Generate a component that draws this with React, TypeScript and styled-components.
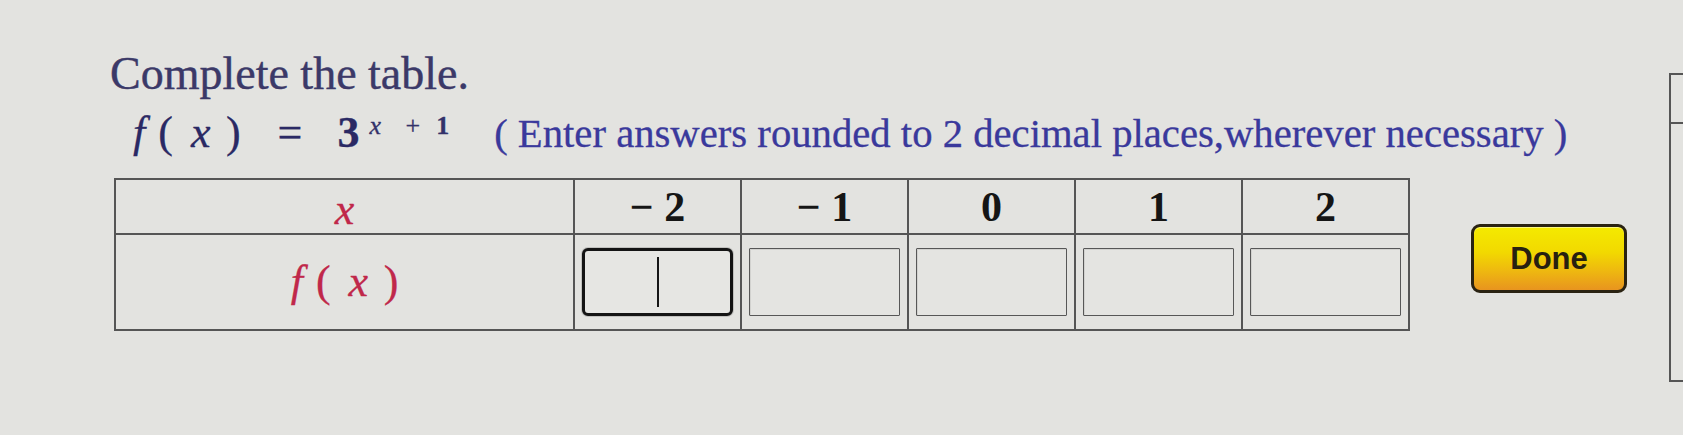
import React from "react";
import styled, { createGlobalStyle } from "styled-components";

const GlobalStyle = createGlobalStyle`
  html, body {
    margin: 0;
    padding: 0;
    background: #e3e3e0;
  }
  body {
    font-family: "Liberation Serif", "Times New Roman", serif;
  }
`;

const SERIF = `"Liberation Serif", "Times New Roman", serif`;
const SANS = `"Liberation Sans", Arial, sans-serif`;
const LINE = "#555555";
const RED = "#c0284a";
const NAVY = "#2a2964";

const Page = styled.div`
  display: flex;
  width: 1683px;
  height: 435px;
  overflow: hidden;
  background: #e3e3e0;
`;

const Main = styled.main`
  flex: none;
  width: 1669px;
  box-sizing: border-box;
  padding: 49px 0 0 110px;
`;

const Title = styled.h1`
  margin: 0;
  height: 50px;
  font-family: ${SERIF};
  font-weight: 400;
  font-size: 46px;
  line-height: 50px;
  color: #3b3968;
  -webkit-text-stroke: 0.4px currentColor;
  white-space: nowrap;
`;

const FormulaLine = styled.div`
  margin-top: 9px;
  height: 50px;
  font-family: ${SERIF};
  font-size: 40.7px;
  line-height: 50px;
  color: ${NAVY};
  -webkit-text-stroke: 0.3px currentColor;
  white-space: nowrap;
`;

const Glyph = styled.span<{
  $ml?: number;
  $italic?: boolean;
  $bold?: boolean;
  $size?: number;
  $color?: string;
}>`
  margin-left: ${(p) => p.$ml ?? 0}px;
  font-size: ${(p) => p.$size ?? 44}px;
  font-style: ${(p) => (p.$italic ? "italic" : "normal")};
  font-weight: ${(p) => (p.$bold ? 700 : 400)};
  color: ${(p) => p.$color ?? "inherit"};
`;

const Sup = styled.span`
  font-size: 26px;
  line-height: 26px;
  vertical-align: 13px;
  color: #33326a;
`;

const Instruction = styled.span`
  margin-left: 45px;
  font-size: 40.7px;
  color: #3a399c;
`;

const TableRow = styled.div`
  display: flex;
  align-items: flex-start;
  margin-top: 20px;
`;

const Grid = styled.div`
  display: grid;
  grid-template-columns: 459px repeat(5, 167px);
  grid-template-rows: 55px 96px;
  margin-left: 4px;
  border-left: 2px solid ${LINE};
  border-top: 2px solid ${LINE};
`;

const Cell = styled.div`
  display: flex;
  align-items: center;
  justify-content: center;
  box-sizing: border-box;
  border-right: 2px solid ${LINE};
  border-bottom: 2px solid ${LINE};
`;

const HeadNum = styled.span`
  font-family: ${SERIF};
  font-weight: 700;
  font-size: 42px;
  line-height: 1;
  color: #151515;
  white-space: pre;
`;

const HeadVar = styled.span`
  margin-top: 6px;
  font-family: ${SERIF};
  font-style: italic;
  font-size: 44px;
  line-height: 1;
  color: ${RED};
  -webkit-text-stroke: 0.3px currentColor;
`;

const FxLabel = styled.span`
  font-family: ${SERIF};
  font-size: 44px;
  line-height: 50px;
  white-space: nowrap;
  color: ${RED};
  -webkit-text-stroke: 0.3px currentColor;
`;

const AnswerBox = styled.div<{ $focused?: boolean }>`
  display: flex;
  align-items: center;
  justify-content: center;
  box-sizing: border-box;
  width: 151px;
  height: 68px;
  border: ${(p) => (p.$focused ? "3px solid #141414" : "1.5px solid #575757")};
  border-radius: ${(p) => (p.$focused ? 6 : 1)}px;
  background: ${(p) => (p.$focused ? "#e6e6e3" : "#e4e4e1")};
  box-shadow: ${(p) =>
    p.$focused
      ? "0 0 0 1px rgba(0,0,0,0.15)"
      : "inset 1px 1px 0 rgba(0,0,0,0.08)"};
`;

const Caret = styled.span`
  width: 2px;
  height: 50px;
  background: #161616;
`;

const DoneButton = styled.button`
  flex: none;
  margin: 46px 0 0 61px;
  width: 156px;
  height: 69px;
  box-sizing: border-box;
  padding: 0;
  border: 3px solid #2a2312;
  border-radius: 9px;
  background: linear-gradient(
    to bottom,
    #f4ea00 0%,
    #f2d900 40%,
    #eeb810 70%,
    #e8941f 100%
  );
  box-shadow: inset 0 1px 0 rgba(255, 255, 210, 0.6);
  font-family: ${SANS};
  font-weight: 700;
  font-size: 31px;
  line-height: 1;
  color: #272010;
  cursor: pointer;
`;

const SidePanel = styled.aside`
  flex: 1;
  display: flex;
  flex-direction: column;
  margin-top: 73px;
  height: 309px;
  box-sizing: border-box;
  border: 2px solid ${LINE};
  border-right: none;
`;

const SideHeader = styled.div`
  height: 47px;
  border-bottom: 2px solid ${LINE};
`;

const Fx: React.FC<{ $ml?: number }> = ({ $ml = 0 }) => (
  <>
    <Glyph $ml={$ml} $italic>
      f
    </Glyph>
    <Glyph $ml={13}>(</Glyph>
    <Glyph $ml={18} $italic>
      x
    </Glyph>
    <Glyph $ml={15.5}>)</Glyph>
  </>
);

const xValues = ["\u2212 2", "\u2212 1", "0", "1", "2"];

export default function App() {
  return (
    <>
      <GlobalStyle />
      <Page>
        <Main>
          <Title>Complete the table.</Title>
          <FormulaLine>
            <Fx $ml={23} />
            <Glyph $ml={37}>=</Glyph>
            <Glyph $ml={35} $bold>
              3
            </Glyph>
            <Sup>
              <Glyph $ml={10} $size={26} $italic>
                x
              </Glyph>
              <Glyph $ml={24.5} $size={26}>
                +
              </Glyph>
              <Glyph $ml={16} $size={26} $bold>
                1
              </Glyph>
            </Sup>
            <Instruction>
              ( Enter answers rounded to 2 decimal places,wherever necessary )
            </Instruction>
          </FormulaLine>
          <TableRow>
            <Grid>
              <Cell>
                <HeadVar>x</HeadVar>
              </Cell>
              {xValues.map((v) => (
                <Cell key={v}>
                  <HeadNum>{v}</HeadNum>
                </Cell>
              ))}
              <Cell>
                <FxLabel>
                  <Fx />
                </FxLabel>
              </Cell>
              {xValues.map((v, i) => (
                <Cell key={"a" + v}>
                  <AnswerBox $focused={i === 0}>
                    {i === 0 && <Caret />}
                  </AnswerBox>
                </Cell>
              ))}
            </Grid>
            <DoneButton type="button">Done</DoneButton>
          </TableRow>
        </Main>
        <SidePanel>
          <SideHeader />
        </SidePanel>
      </Page>
    </>
  );
}
